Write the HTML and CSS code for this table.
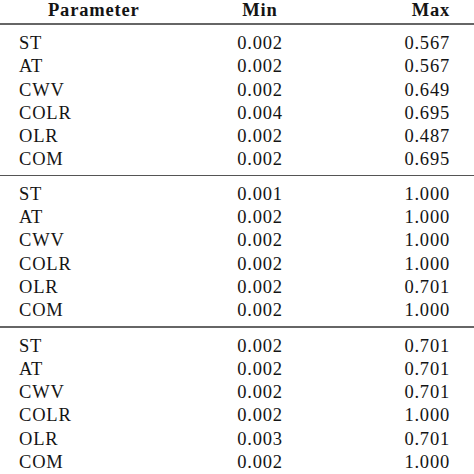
FILE: index.html
```html
<!DOCTYPE html>
<html>
<head>
<meta charset="utf-8">
<link rel="stylesheet" href="styles.css">
</head>
<body>
<table class="tbl">
  <thead>
    <tr>
      <th class="c-param">Parameter</th>
      <th class="c-min">Min</th>
      <th class="c-max">Max</th>
    </tr>
  </thead>
  <tbody class="grp thick">
    <tr><td class="c-param">ST</td><td class="c-min">0.002</td><td class="c-max">0.567</td></tr>
    <tr><td class="c-param">AT</td><td class="c-min">0.002</td><td class="c-max">0.567</td></tr>
    <tr><td class="c-param">CWV</td><td class="c-min">0.002</td><td class="c-max">0.649</td></tr>
    <tr><td class="c-param">COLR</td><td class="c-min">0.004</td><td class="c-max">0.695</td></tr>
    <tr><td class="c-param">OLR</td><td class="c-min">0.002</td><td class="c-max">0.487</td></tr>
    <tr><td class="c-param">COM</td><td class="c-min">0.002</td><td class="c-max">0.695</td></tr>
  </tbody>
  <tbody class="grp thin">
    <tr><td class="c-param">ST</td><td class="c-min">0.001</td><td class="c-max">1.000</td></tr>
    <tr><td class="c-param">AT</td><td class="c-min">0.002</td><td class="c-max">1.000</td></tr>
    <tr><td class="c-param">CWV</td><td class="c-min">0.002</td><td class="c-max">1.000</td></tr>
    <tr><td class="c-param">COLR</td><td class="c-min">0.002</td><td class="c-max">1.000</td></tr>
    <tr><td class="c-param">OLR</td><td class="c-min">0.002</td><td class="c-max">0.701</td></tr>
    <tr><td class="c-param">COM</td><td class="c-min">0.002</td><td class="c-max">1.000</td></tr>
  </tbody>
  <tbody class="grp thick">
    <tr><td class="c-param">ST</td><td class="c-min">0.002</td><td class="c-max">0.701</td></tr>
    <tr><td class="c-param">AT</td><td class="c-min">0.002</td><td class="c-max">0.701</td></tr>
    <tr><td class="c-param">CWV</td><td class="c-min">0.002</td><td class="c-max">0.701</td></tr>
    <tr><td class="c-param">COLR</td><td class="c-min">0.002</td><td class="c-max">1.000</td></tr>
    <tr><td class="c-param">OLR</td><td class="c-min">0.003</td><td class="c-max">0.701</td></tr>
    <tr><td class="c-param">COM</td><td class="c-min">0.002</td><td class="c-max">1.000</td></tr>
  </tbody>
</table>
</body>
</html>
```
FILE: styles.css
```css
html, body {
  margin: 0;
  padding: 0;
  background: #ffffff;
}
body {
  width: 474px;
  height: 474px;
  overflow: hidden;
  font-family: "Liberation Serif", "Times New Roman", serif;
  color: #141414;
}
.tbl {
  width: 474px;
  border-collapse: collapse;
  table-layout: fixed;
  font-size: 18.5px;
  letter-spacing: 0.8px;
}
.tbl th,
.tbl td {
  box-sizing: border-box;
  padding: 0;
}
.tbl th {
  font-weight: bold;
  height: 24px;
  line-height: 21px;
  vertical-align: top;
}
.tbl td {
  height: 23.3px;
  line-height: 23.3px;
}
.c-param {
  width: 200px;
  text-align: left;
  padding-left: 19px !important;
}
th.c-param {
  padding-left: 48px !important;
}
.c-min {
  width: 120px;
  text-align: center;
}
.c-max {
  text-align: right;
  padding-right: 24px !important;
}
.grp.thick tr:first-child td {
  border-top: 2px solid #666666;
}
.grp.thin tr:first-child td {
  border-top: 1.5px solid #555555;
}
.grp tr:first-child td {
  padding-top: 7px;
}
.grp tr:last-child td {
  padding-bottom: 3px;
}
```
